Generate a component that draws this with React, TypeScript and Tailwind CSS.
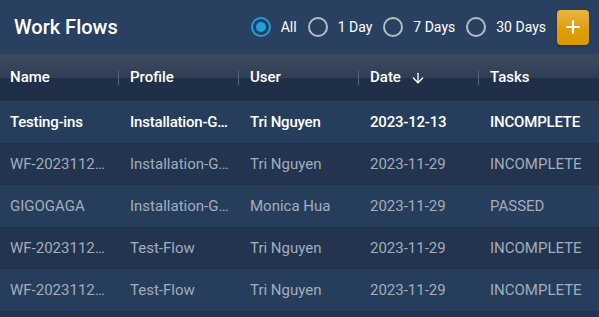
import { ArrowDown, Plus } from "lucide-react";

type Flow = {
  name: string;
  profile: string;
  user: string;
  date: string;
  tasks: string;
};

const flows: Flow[] = [
  { name: "Testing-ins", profile: "Installation-Guide", user: "Tri Nguyen", date: "2023-12-13", tasks: "INCOMPLETE" },
  { name: "WF-20231129-01", profile: "Installation-Guide", user: "Tri Nguyen", date: "2023-11-29", tasks: "INCOMPLETE" },
  { name: "GIGOGAGA", profile: "Installation-Guide", user: "Monica Hua", date: "2023-11-29", tasks: "PASSED" },
  { name: "WF-20231129-02", profile: "Test-Flow", user: "Tri Nguyen", date: "2023-11-29", tasks: "INCOMPLETE" },
  { name: "WF-20231129-03", profile: "Test-Flow", user: "Tri Nguyen", date: "2023-11-29", tasks: "INCOMPLETE" },
];

const ranges = ["All", "1 Day", "7 Days", "30 Days"];

const Radio = ({ label, checked }: { label: string; checked: boolean }) => (
  <label className="flex items-center gap-[10px] cursor-pointer">
    {checked ? (
      <span className="flex h-5 w-5 items-center justify-center rounded-full border-[2px] border-[#1e9fe0]">
        <span className="h-[10px] w-[10px] rounded-full bg-[#1e9fe0]" />
      </span>
    ) : (
      <span className="h-5 w-5 rounded-full border-[2px] border-[#b7bcc5]" />
    )}
    <span className="text-[14px] text-white">{label}</span>
  </label>
);

const App = () => {
  return (
    <div
      className="w-[599px] h-[317px] overflow-hidden bg-[#22344f]"
      style={{ fontFamily: "Roboto, 'Liberation Sans', sans-serif" }}
    >
      {/* top bar */}
      <header className="flex h-[54px] items-center justify-between bg-[#2a4060] pl-[14px] pr-[10px]">
        <h1 className="text-[20px] font-medium text-white">Work Flows</h1>
        <div className="flex items-center gap-[11px]">
          {ranges.map((r, i) => (
            <Radio key={r} label={r} checked={i === 0} />
          ))}
          <button className="flex h-[35px] w-[32px] items-center justify-center rounded-[4px] bg-gradient-to-b from-[#e9b541] via-[#de9f0c] to-[#d99700] shadow-[0_1px_2px_rgba(0,0,0,0.4)]">
            <Plus className="h-5 w-5 text-white" strokeWidth={2.5} />
          </button>
        </div>
      </header>

      {/* table */}
      <table className="w-[600px] table-fixed border-collapse">
        <thead>
          <tr className="h-[47px] bg-[linear-gradient(to_bottom,#3d4b60_0%,#2f3e54_50%,#1f2f48_51%,#1f2f48_100%)]">
            {["Name", "Profile", "User", "Date", "Tasks"].map((h, i) => (
              <th key={h} className="relative w-[120px] px-[10px] text-left text-[15px] font-medium text-white">
                {i > 0 && (
                  <span className="absolute left-[-2px] top-[17px] h-[14px] w-px bg-[#56637a]" />
                )}
                <span className="flex items-center gap-[9px]">
                  {h}
                  {h === "Date" && <ArrowDown className="h-4 w-4" strokeWidth={2} />}
                </span>
              </th>
            ))}
          </tr>
        </thead>
        <tbody>
          {flows.map((f, i) => {
            const first = i === 0;
            return (
              <tr
                key={i}
                className={`h-[42px] ${i % 2 === 0 ? "bg-[#263d5c]" : "bg-[#22344f]"} ${
                  first ? "font-medium text-white tracking-[-0.2px]" : "font-normal text-[#a3adbb]"
                }`}
              >
                {[f.name, f.profile, f.user, f.date, f.tasks].map((c, j) => (
                  <td key={j} className="px-[10px] text-[15px] truncate">
                    {c}
                  </td>
                ))}
              </tr>
            );
          })}
        </tbody>
      </table>
    </div>
  );
};

export default App;
